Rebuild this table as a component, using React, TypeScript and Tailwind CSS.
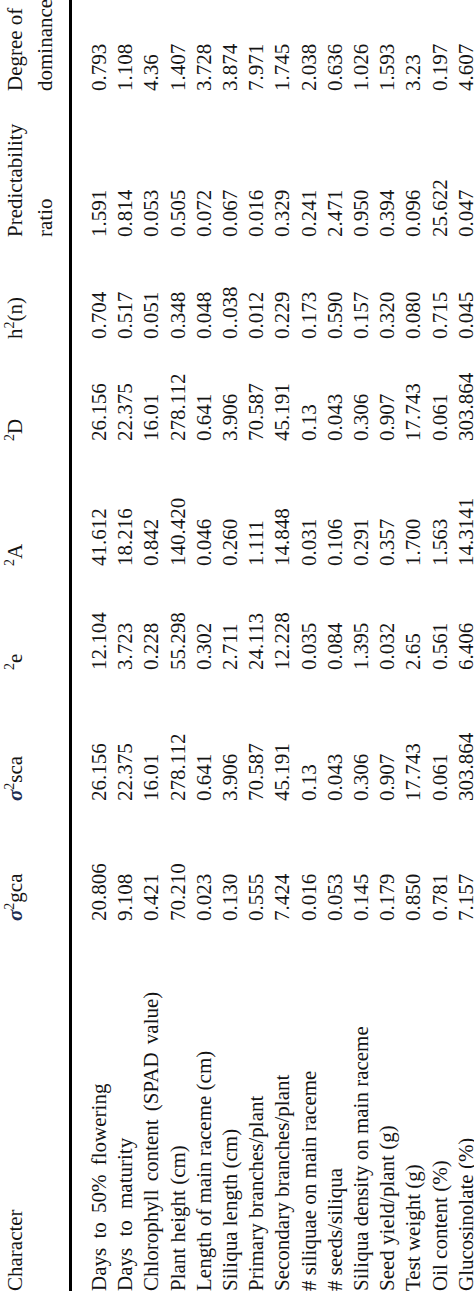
const rows = [
  { name: "Days to 50% flowering", ws: "[word-spacing:4px]", v: ["20.806", "26.156", "12.104", "41.612", "26.156", "0.704", "1.591", "0.793"] },
  { name: "Days to maturity", ws: "[word-spacing:6px]", v: ["9.108", "22.375", "3.723", "18.216", "22.375", "0.517", "0.814", "1.108"] },
  { name: "Chlorophyll content (SPAD value)", ws: "[word-spacing:3px]", v: ["0.421", "16.01", "0.228", "0.842", "16.01", "0.051", "0.053", "4.36"] },
  { name: "Plant height (cm)", ws: "", v: ["70.210", "278.112", "55.298", "140.420", "278.112", "0.348", "0.505", "1.407"] },
  { name: "Length of main raceme (cm)", ws: "", v: ["0.023", "0.641", "0.302", "0.046", "0.641", "0.048", "0.072", "3.728"] },
  { name: "Siliqua length (cm)", ws: "", v: ["0.130", "3.906", "2.711", "0.260", "3.906", "0..038", "0.067", "3.874"] },
  { name: "Primary branches/plant", ws: "", v: ["0.555", "70.587", "24.113", "1.111", "70.587", "0.012", "0.016", "7.971"] },
  { name: "Secondary branches/plant", ws: "", v: ["7.424", "45.191", "12.228", "14.848", "45.191", "0.229", "0.329", "1.745"] },
  { name: "# siliquae on main raceme", ws: "", v: ["0.016", "0.13", "0.035", "0.031", "0.13", "0.173", "0.241", "2.038"] },
  { name: "# seeds/siliqua", ws: "", v: ["0.053", "0.043", "0.084", "0.106", "0.043", "0.590", "2.471", "0.636"] },
  { name: "Siliqua density on main raceme", ws: "", v: ["0.145", "0.306", "1.395", "0.291", "0.306", "0.157", "0.950", "1.026"] },
  { name: "Seed yield/plant (g)", ws: "", v: ["0.179", "0.907", "0.032", "0.357", "0.907", "0.320", "0.394", "1.593"] },
  { name: "Test weight (g)", ws: "", v: ["0.850", "17.743", "2.65", "1.700", "17.743", "0.080", "0.096", "3.23"] },
  { name: "Oil content (%)", ws: "", v: ["0.781", "0.061", "0.561", "1.563", "0.061", "0.715", "25.622", "0.197"] },
  { name: "Glucosinolate (%)", ws: "", v: ["7.157", "303.864", "6.406", "14.3141", "303.864", "0.045", "0.047", "4.607"] },
];

// column widths in the un-rotated table (table is turned 90° like the scanned page)
const cols = "grid grid-cols-[370px_120px_131px_104px_125px_102px_102px_146px_98px]";

const Sigma = () => (
  <span className="font-bold italic text-[#1d2c52]">σ</span>
);

const Sup = ({ children }: { children: string }) => (
  <sup className="relative -top-[8px] text-[14px] leading-none">{children}</sup>
);

export default function App() {
  return (
    <div className="h-[1298px] w-[474px] overflow-hidden bg-white">
      <div className="h-[474px] w-[1298px] origin-top-left translate-y-[1298px] -rotate-90 font-['Liberation_Serif','Times_New_Roman',serif] text-[21px] text-[#141414]">
        <div className="-mt-[7px] h-[69px] leading-[30px]">
          <div className={`${cols} whitespace-nowrap`}>
            <div>Character</div>
            <div>
              <Sigma />
              <Sup>2</Sup>gca
            </div>
            <div>
              <Sigma />
              <Sup>2</Sup>sca
            </div>
            <div>
              <Sup>2</Sup>e
            </div>
            <div>
              <Sup>2</Sup>A
            </div>
            <div>
              <Sup>2</Sup>D
            </div>
            <div>
              h<Sup>2</Sup>(n)
            </div>
            <div>
              Predictability
              <br />
              ratio
            </div>
            <div>
              Degree of
              <br />
              dominance
            </div>
          </div>
        </div>
        <div className="h-[3px] bg-black" />
        <div className="pt-[14px] leading-[26.2px]">
          {rows.map((r) => (
            <div key={r.name} className={`${cols} whitespace-nowrap`}>
              <div className={r.ws}>{r.name}</div>
              {r.v.map((x, i) => (
                <div key={i}>{x}</div>
              ))}
            </div>
          ))}
        </div>
      </div>
    </div>
  );
}
